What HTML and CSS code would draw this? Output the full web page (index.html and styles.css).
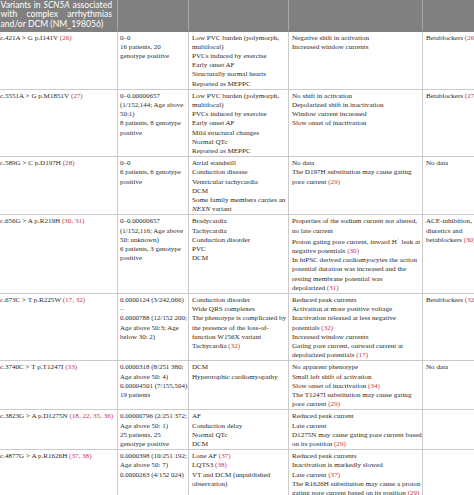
FILE: index.html
```html
<!DOCTYPE html>
<html lang="en">
<head>
<meta charset="utf-8">
<title>SCN5A variants</title>
<link rel="stylesheet" href="styles.css">
</head>
<body>
<div class="frame">
<table class="variants">
  <colgroup>
    <col class="c1"><col class="c2"><col class="c3"><col class="c4"><col class="c5">
  </colgroup>
  <thead>
    <tr>
      <th class="title"><span class="hl just">Variants in <i>SCN5A</i> associated</span><span class="hl just">with complex arrhythmias</span><span class="hl">and/or DCM (NM_198056)</span></th>
      <th></th><th></th><th></th><th></th>
    </tr>
  </thead>
  <tbody>
    <tr>
      <td>c.421A &gt; G p.I141V <span class="ref">(26)</span></td>
      <td class="num">0–0<br>16 patients, 20<br>genotype positive</td>
      <td>Low PVC burden (polymorph,<br>multifocal)<br>PVCs induced by exercise<br>Early onset AF<br>Structurally normal hearts<br>Reported as MEPPC</td>
      <td>Negative shift in activation<br>Increased window currents</td>
      <td>Betablockers <span class="ref">(26)</span></td>
    </tr>
    <tr>
      <td>c.5551A &gt; G p.M1851V <span class="ref">(27)</span></td>
      <td class="num">0–0.00000657<br>(1/152,144; Age above<br>50:1)<br>8 patients, 8 genotype<br>positive</td>
      <td>Low PVC burden (polymorph,<br>multifocal)<br>PVCs induced by exercise<br>Early onset AF<br>Mild structural changes<br>Normal QTc<br>Reported as MEPPC</td>
      <td>No shift in activation<br>Depolarized shift in inactivation<br>Window current increased<br>Slow onset of inactivation</td>
      <td>Betablockers <span class="ref">(27)</span></td>
    </tr>
    <tr>
      <td>c.589G &gt; C p.D197H <span class="ref">(28)</span></td>
      <td class="num">0–0<br>6 patients, 6 genotype<br>positive</td>
      <td>Atrial standstill<br>Conduction disease<br>Ventricular tachycardia<br>DCM<br>Some family members carries an<br><i>NEXN</i> variant</td>
      <td>No data<br>The D197H substitution may cause gating<br>pore current <span class="ref">(29)</span></td>
      <td>No data</td>
    </tr>
    <tr>
      <td>c.656G &gt; A p.R219H <span class="ref">(30, 31)</span></td>
      <td class="num">0–0.00000657<br>(1/152,116; Age above<br>50: unknown)<br>6 patients, 3 genotype<br>positive</td>
      <td>Bradycardia<br>Tachycardia<br>Conduction disorder<br>PVC<br>DCM</td>
      <td>Properties of the sodium current not altered,<br>no late current<br>Proton gating pore current, inward H<sup>+</sup> leak at<br>negative potentials <span class="ref">(30)</span><br>In hiPSC derived cardiomyocytes the action<br>potential duration was increased and the<br>resting membrane potential was<br>depolarized <span class="ref">(31)</span></td>
      <td>ACE-inhibition,<br>diuretics and<br>betablockers <span class="ref">(30)</span></td>
    </tr>
    <tr>
      <td>c.673C &gt; T p.R225W <span class="ref">(17, 32)</span></td>
      <td class="num">0.0000124 (3/242,066)<br>–<br>0.0000788 (12/152 200;<br>Age above 50:3; Age<br>below 30: 2)</td>
      <td>Conduction disorder<br>Wide QRS complexes<br>The phenotype is complicated by<br>the presence of the loss-of-<br>function W156X variant<br>Tachycardia <span class="ref">(32)</span></td>
      <td>Reduced peak currents<br>Activation at more positive voltage<br>Inactivation released at less negative<br>potentials <span class="ref">(32)</span><br>Increased window currents<br>Gating pore current, outward current at<br>depolarized potentials <span class="ref">(17)</span></td>
      <td>Betablockers <span class="ref">(32)</span></td>
    </tr>
    <tr>
      <td>c.3740C &gt; T p.T1247I <span class="ref">(33)</span></td>
      <td class="num">0.0000318 (8/251 380;<br>Age above 50: 4)<br>0.00004501 (7/155,504)<br>19 patients</td>
      <td>DCM<br>Hypertrophic cardiomyopathy</td>
      <td>No apparent phenotype<br>Small left shift of activation<br>Slow onset of inactivation <span class="ref">(34)</span><br>The T1247I substitution may cause gating<br>pore current <span class="ref">(29)</span></td>
      <td>No data</td>
    </tr>
    <tr>
      <td>c.3823G &gt; A p.D1275N <span class="ref">(18, 22, 35, 36)</span></td>
      <td class="num">0.00000796 (2/251 372;<br>Age above 50: 1)<br>25 patients, 25<br>genotype positive</td>
      <td>AF<br>Conduction delay<br>Normal QTc<br>DCM</td>
      <td>Reduced peak current<br>Late current<br>D1275N may cause gating pore current based<br>on its position <span class="ref">(29)</span></td>
      <td></td>
    </tr>
    <tr>
      <td>c.4877G &gt; A p.R1626H <span class="ref">(37, 38)</span></td>
      <td class="num">0.0000398 (10/251 192;<br>Age above 50: 7)<br>0.0000263 (4/152 024)</td>
      <td>Lone AF <span class="ref">(37)</span><br>LQTS3 <span class="ref">(38)</span><br>VT and DCM (unpublished<br>observation)</td>
      <td>Reduced peak currents<br>Inactivation is markedly slowed<br>Late current <span class="ref">(37)</span><br>The R1626H substitution may cause a proton<br>gating pore current based on its position <span class="ref">(29)</span></td>
      <td></td>
    </tr>
  </tbody>
</table>
</div>
</body>
</html>
```

FILE: styles.css
```css
html, body {
  margin: 0;
  padding: 0;
  background: #ffffff;
  overflow: hidden;
}

.frame {
  width: 474px;
  height: 495px;
  overflow: hidden;
}

.variants {
  border-collapse: collapse;
  table-layout: fixed;
  width: 486px;
  margin-left: -4px;
}

.c1 { width: 121px; }
.c2 { width: 71px; }
.c3 { width: 100px; }
.c4 { width: 134px; }
.c5 { width: 60px; }

.variants thead tr {
  height: 31px;
}

.variants th {
  background: #808080;
  color: #ffffff;
  font-family: Lato, "Open Sans", sans-serif;
  font-weight: 400;
  font-size: 8.6px;
  line-height: 9.3px;
  text-align: left;
  vertical-align: top;
  padding: 1px 5px 1px 4px;
  border-left: 1px solid #a6a6a6;
  border-right: 1px solid #a6a6a6;
  border-bottom: 1px solid #808080;
}

.variants th.title {
  border-left: none;
}

.hl {
  display: block;
  white-space: nowrap;
}

.hl.just {
  text-align: justify;
  text-align-last: justify;
}

.variants td {
  font-family: "Liberation Serif", "Times New Roman", serif;
  font-size: 7.1px;
  line-height: 9.2px;
  color: #2a2a2a;
  text-align: left;
  white-space: nowrap;
  vertical-align: top;
  padding: 2px 3px 0;
  border: 1px solid #cbcbcb;
}

.variants td.num {
  font-size: 6.95px;
  padding-left: 2px;
  padding-right: 1px;
}

.ref {
  color: #c8364c;
}

sup {
  font-size: 5px;
  line-height: 6px;
  vertical-align: 4px;
}
```
